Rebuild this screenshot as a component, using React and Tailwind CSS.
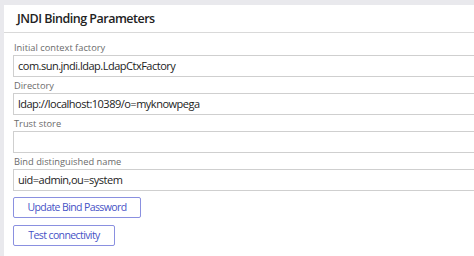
const fields = [
    { label: 'Initial context factory', value: 'com.sun.jndi.ldap.LdapCtxFactory' },
    { label: 'Directory', value: 'ldap://localhost:10389/o=myknowpega' },
    { label: 'Trust store', value: '' },
    { label: 'Bind distinguished name', value: 'uid=admin,ou=system' },
]

export default function App() {
    return (
        <div
            className="w-[474px] h-[256px] overflow-hidden bg-[#e9e9ed] pt-[5px] pl-[4px]"
            style={{ fontFamily: '"Open Sans", "Noto Sans", sans-serif' }}
        >
            <div className="w-[480px] h-[260px] bg-white">
                {/* header */}
                <div className="h-[28px] border-b border-[#d9d9d9] flex items-center pl-[13px] pt-[1px]">
                    <h2 className="text-[12.5px] font-semibold tracking-[-0.5px] text-[#222] leading-none">JNDI Binding Parameters</h2>
                </div>

                {/* fields */}
                <div className="pl-[9px] pt-[8px]">
                    {fields.map((f) => (
                        <div key={f.label} className="mb-[2px]">
                            <div className="text-[9.3px] text-[#6b6b6b] leading-[14px] pl-[1px]">{f.label}</div>
                            <div className="h-[22px] border border-[#cfcfcf] bg-white flex items-center pl-[4px] text-[11px] tracking-[-0.5px] text-[#222]">
                                {f.value}
                            </div>
                        </div>
                    ))}

                    <div className="flex flex-col items-start gap-[7px] mt-[6px]">
                        <button className="h-[21px] w-[128px] border border-[#8a90e0] rounded-[2px] text-[10.5px] tracking-[-0.6px] leading-none whitespace-nowrap text-[#4652c6] bg-white">
                            Update Bind Password
                        </button>
                        <button className="h-[21px] w-[102px] border border-[#8a90e0] rounded-[2px] text-[10.5px] tracking-[-0.6px] leading-none whitespace-nowrap text-[#4652c6] bg-white">
                            Test connectivity
                        </button>
                    </div>
                </div>
            </div>
        </div>
    )
}
